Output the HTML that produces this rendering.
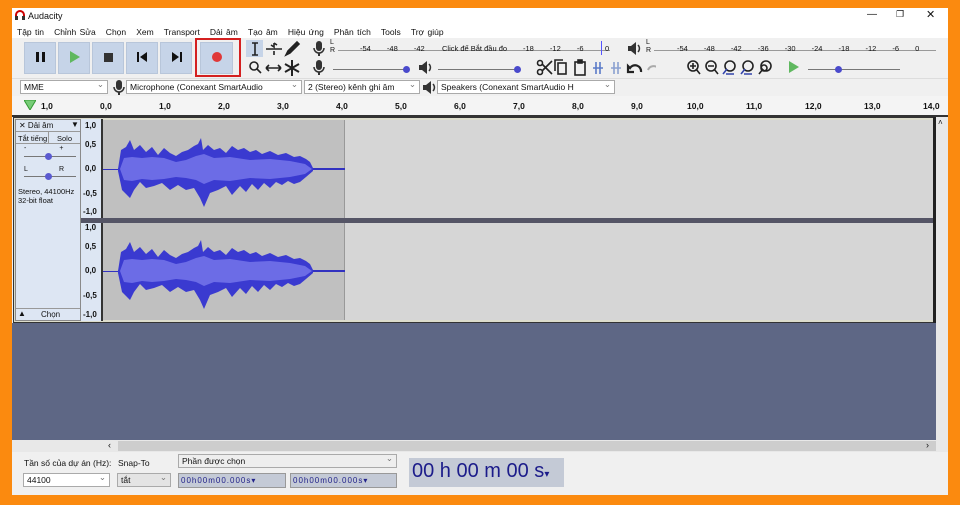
<!DOCTYPE html>
<html><head><meta charset="utf-8"><style>
*{margin:0;padding:0;box-sizing:border-box}
body{width:960px;height:505px;background:#fb8a0f;position:relative;overflow:hidden;font-family:"Liberation Sans","Noto Sans CJK SC",sans-serif;font-size:9px;color:#111}
.a{position:absolute}
.win{left:12px;top:8px;width:936px;height:487px;background:#f0f0f0}
.btn{position:absolute;top:42px;width:32px;height:32px;background:#c6d4e8;border:1px solid #b8c6da}
.t{position:absolute;white-space:nowrap}
.dd{position:absolute;height:14px;background:#fff;border:1px solid #aaa;font-size:8.5px;padding:1px 3px;white-space:nowrap;overflow:hidden}
.dd:after{content:"⌄";position:absolute;right:3px;top:-2px;color:#777}
.ic{position:absolute;font-size:14px;color:#222;line-height:16px}
.vl{position:absolute;left:85px;font-size:8px;font-weight:bold}
</style></head><body>
<svg width="0" height="0" style="position:absolute"><defs>
<g id="mic"><rect x="4" y="0" width="6" height="10" rx="3" fill="#333"/><path d="M2 7 A5 5 0 0 0 12 7" fill="none" stroke="#333" stroke-width="1.5"/><rect x="6" y="12" width="2" height="3" fill="#333"/></g>
<g id="spk"><path d="M1 5 H4 L9 1 V14 L4 10 H1Z" fill="#333"/><path d="M11 4 A5 5 0 0 1 11 11" fill="none" stroke="#333" stroke-width="1.5"/></g>
</defs></svg>
<div class="a win"></div>
<div class="a" style="left:12px;top:8px;width:936px;height:16px;background:#fff"></div>
<svg class="a" style="left:14px;top:10px" width="12" height="11"><path d="M2 8 V5 A4 4 0 0 1 10 5 V8" fill="none" stroke="#c00" stroke-width="2"/><rect x="1" y="6" width="3" height="4" fill="#333"/><rect x="8" y="6" width="3" height="4" fill="#333"/></svg>
<div class="t" style="left:28px;top:11px">Audacity</div>
<div class="t" style="left:867px;top:9px;font-size:10px">—</div>
<div class="t" style="left:896px;top:9px;font-size:9px">❐</div>
<div class="t" style="left:926px;top:8px;font-size:11px">✕</div>
<div class="a" style="left:12px;top:24px;width:936px;height:14px;background:#fff"></div>
<div class="t" style="left:17px;top:27px;font-size:8.5px;word-spacing:1px">Tập tin&nbsp;&nbsp;&nbsp;Chỉnh Sửa&nbsp;&nbsp;&nbsp;Chọn&nbsp;&nbsp;&nbsp;Xem&nbsp;&nbsp;&nbsp;Transport&nbsp;&nbsp;&nbsp;Dải âm&nbsp;&nbsp;&nbsp;Tạo âm&nbsp;&nbsp;&nbsp;Hiệu ứng&nbsp;&nbsp;&nbsp;Phân tích&nbsp;&nbsp;&nbsp;Tools&nbsp;&nbsp;&nbsp;Trợ giúp</div>
<div class="btn" style="left:24px"></div><div class="btn" style="left:58px"></div><div class="btn" style="left:92px"></div><div class="btn" style="left:126px"></div><div class="btn" style="left:160px"></div><div class="btn" style="left:200px;width:33px"></div>
<div class="a" style="left:195px;top:38px;width:46px;height:39px;border:2px solid #d42020"></div>
<div class="a" style="left:36px;top:52px;width:3px;height:10px;background:#111"></div><div class="a" style="left:42px;top:52px;width:3px;height:10px;background:#111"></div>
<svg class="a" style="left:69px;top:50px" width="12" height="14"><path d="M1 1 L11 7 L1 13Z" fill="#5fb85f"/></svg>
<div class="a" style="left:104px;top:53px;width:9px;height:9px;background:#333"></div>
<svg class="a" style="left:137px;top:52px" width="10" height="10"><rect x="0" y="0" width="2" height="10" fill="#111"/><path d="M10 0 L3 5 L10 10Z" fill="#111"/></svg>
<svg class="a" style="left:172px;top:52px" width="10" height="10"><rect x="8" y="0" width="2" height="10" fill="#111"/><path d="M0 0 L7 5 L0 10Z" fill="#111"/></svg>
<div class="a" style="left:212px;top:52px;width:10px;height:10px;border-radius:50%;background:#e03838"></div>
<div class="a" style="left:246px;top:40px;width:17px;height:17px;background:#c6d4e8"></div>
<svg class="a" style="left:246px;top:40px" width="60" height="38" stroke="#222" fill="none" stroke-width="1.6">
<path d="M9 3V15M6 3H12M6 15H12"/>
<path d="M20 9H36M28 3V7L25 5M28 3L31 5M28 15V11"/>
<path d="M40 15L42 11L51 2L53 4L44 13Z" fill="#222"/>
<circle cx="8" cy="26" r="4"/><path d="M11 29L15 33"/>
<path d="M20 28H35M20 28L23 25M20 28L23 31M35 28L32 25M35 28L32 31"/>
<path d="M46 20V36M39 24L53 32M39 32L53 24" stroke-width="2"/>
</svg>
<svg class="a" style="left:312px;top:41px" width="14" height="16"><use href="#mic"/></svg>
<svg class="a" style="left:312px;top:60px" width="14" height="16"><use href="#mic"/></svg>
<div class="t" style="left:330px;top:39px;font-size:7px;line-height:8px">L<br>R</div>
<div class="a" style="left:338px;top:50px;width:272px;height:1px;background:#999"></div>
<div class="t" style="left:360px;top:44px;font-size:7.5px;word-spacing:14px">-54 -48 -42</div>
<div class="t" style="left:442px;top:44px;font-size:7.5px">Click để Bắt đầu đo</div>
<div class="t" style="left:523px;top:44px;font-size:7.5px;word-spacing:14px">-18 -12 -6</div>
<div class="a" style="left:601px;top:41px;width:1px;height:14px;background:#55f"></div><div class="t" style="left:605px;top:44px;font-size:7.5px">0</div>
<div class="a" style="left:333px;top:69px;width:74px;height:1px;background:#777"></div>
<div class="a" style="left:403px;top:66px;width:7px;height:7px;border-radius:50%;background:#4a4acc"></div>
<svg class="a" style="left:418px;top:60px" width="16" height="16"><use href="#spk"/></svg>
<div class="a" style="left:438px;top:69px;width:80px;height:1px;background:#777"></div>
<div class="a" style="left:514px;top:66px;width:7px;height:7px;border-radius:50%;background:#4a4acc"></div>
<svg class="a" style="left:536px;top:58px" width="120" height="20" stroke="#222" fill="none" stroke-width="1.6">
<circle cx="4" cy="14" r="2.5"/><circle cx="4" cy="5" r="2.5"/><path d="M6 13L16 3M6 6L16 16"/>
<rect x="22" y="5" width="8" height="11"/><path d="M19 13V2H27"/>
<rect x="39" y="4" width="10" height="13"/><rect x="42" y="2" width="4" height="3" fill="#222"/>
<path d="M60 4V16M64 4V16M57 10H67" stroke="#5a7ac8"/><path d="M78 4V16M82 4V16M75 10H85" stroke="#8aa0d0"/>
<path d="M105 14A6 6 0 0 0 94 10L92 8V14H98" stroke-width="2.2"/>
<path d="M112 12A6 6 0 0 1 122 10" stroke="#aaa" stroke-width="2"/>
</svg>
<svg class="a" style="left:686px;top:59px" width="95" height="18" stroke="#222" fill="none" stroke-width="1.6">
<circle cx="7" cy="7" r="5"/><path d="M10 10L14 15M4 7H10M7 4V10"/>
<circle cx="25" cy="7" r="5"/><path d="M28 10L32 15M22 7H28"/>
<circle cx="44" cy="7" r="5"/><path d="M41 10L37 15M40 15H48" stroke="#3344aa"/>
<circle cx="62" cy="7" r="5"/><path d="M59 10L55 15M58 15H66" stroke="#3344aa"/>
<circle cx="80" cy="7" r="5"/><circle cx="78" cy="9" r="3"/><path d="M77 10L73 15"/>
</svg>
<svg class="a" style="left:788px;top:61px" width="12" height="12"><path d="M1 0 L11 6 L1 12Z" fill="#5fb85f"/></svg>
<div class="a" style="left:808px;top:69px;width:92px;height:1px;background:#777"></div>
<div class="a" style="left:835px;top:66px;width:7px;height:7px;border-radius:50%;background:#4a4acc"></div>
<svg class="a" style="left:627px;top:41px" width="16" height="16"><use href="#spk"/></svg>
<div class="t" style="left:646px;top:39px;font-size:7px;line-height:8px">L<br>R</div>
<div class="a" style="left:654px;top:50px;width:282px;height:1px;background:#999"></div>
<div class="t" style="left:677px;top:44px;font-size:7.5px;word-spacing:14px">-54 -48 -42 -36 -30 -24 -18 -12 -6 0</div>
<div class="a" style="left:12px;top:78px;width:936px;height:1px;background:#ddd"></div>
<div class="dd" style="left:20px;top:80px;width:88px">MME</div>
<svg class="a" style="left:112px;top:80px" width="14" height="16"><use href="#mic"/></svg>
<div class="dd" style="left:126px;top:80px;width:176px">Microphone (Conexant SmartAudio</div>
<div class="dd" style="left:304px;top:80px;width:116px">2 (Stereo) kênh ghi âm</div>
<svg class="a" style="left:422px;top:80px" width="16" height="16"><use href="#spk"/></svg>
<div class="dd" style="left:437px;top:80px;width:178px">Speakers (Conexant SmartAudio H</div>
<div class="a" style="left:12px;top:96px;width:936px;height:20px;background:#f4f4f4"></div>
<svg class="a" style="left:24px;top:100px" width="12" height="10"><path d="M0 0 L12 0 L6 10Z" fill="#7c7" stroke="#393" /></svg>
<div class="t" style="left:41px;top:101px;font-weight:bold;font-size:8.5px">1,0</div>
<div class="t" style="left:100px;top:101px;font-weight:bold;font-size:8.5px">
<span class="a" style="left:0">0,0</span><span class="a" style="left:59px">1,0</span><span class="a" style="left:118px">2,0</span><span class="a" style="left:177px">3,0</span><span class="a" style="left:236px">4,0</span><span class="a" style="left:295px">5,0</span><span class="a" style="left:354px">6,0</span><span class="a" style="left:413px">7,0</span><span class="a" style="left:472px">8,0</span><span class="a" style="left:531px">9,0</span><span class="a" style="left:587px">10,0</span><span class="a" style="left:646px">11,0</span><span class="a" style="left:705px">12,0</span><span class="a" style="left:764px">13,0</span><span class="a" style="left:823px">14,0</span></div>
<div class="a" style="left:12px;top:115px;width:936px;height:2px;background:#333"></div>
<div class="a" style="left:13px;top:117px;width:923px;height:206px;background:#dcdccc;border:1px solid #333"></div>
<div class="a" style="left:15px;top:119px;width:66px;height:202px;background:#dde6f3;border:1px solid #8a8a8a"></div>
<div class="t" style="left:19px;top:121px;font-size:8px">✕ Dải âm</div><div class="t" style="left:71px;top:120px;font-size:8px">▼</div>
<div class="a" style="left:16px;top:131px;width:64px;height:13px;border-top:1px solid #999;border-bottom:1px solid #999"></div>
<div class="a" style="left:48px;top:131px;width:1px;height:13px;background:#999"></div>
<div class="t" style="left:18px;top:134px;font-size:7.5px">Tắt tiếng</div><div class="t" style="left:57px;top:134px;font-size:7.5px">Solo</div>
<div class="t" style="left:24px;top:145px;font-size:7px">-&nbsp;&nbsp;&nbsp;&nbsp;&nbsp;&nbsp;&nbsp;&nbsp;&nbsp;&nbsp;&nbsp;&nbsp;&nbsp;&nbsp;&nbsp;&nbsp;&nbsp;+</div>
<div class="a" style="left:24px;top:156px;width:52px;height:1px;background:#777"></div><div class="a" style="left:45px;top:153px;width:7px;height:7px;border-radius:50%;background:#5a5ad0"></div>
<div class="t" style="left:24px;top:166px;font-size:7px">L&nbsp;&nbsp;&nbsp;&nbsp;&nbsp;&nbsp;&nbsp;&nbsp;&nbsp;&nbsp;&nbsp;&nbsp;&nbsp;&nbsp;&nbsp;&nbsp;R</div>
<div class="a" style="left:24px;top:176px;width:52px;height:1px;background:#777"></div><div class="a" style="left:45px;top:173px;width:7px;height:7px;border-radius:50%;background:#5a5ad0"></div>
<div class="t" style="left:18px;top:187px;font-size:7.5px;line-height:9px">Stereo, 44100Hz<br>32-bit float</div>
<div class="a" style="left:16px;top:308px;width:64px;height:12px;border-top:1px solid #999"></div>
<div class="t" style="left:18px;top:309px;font-size:8px">▲</div><div class="t" style="left:41px;top:310px;font-size:8px">Chọn</div>
<div class="a" style="left:81px;top:119px;width:22px;height:202px;background:#dde6f3;border-right:2px solid #333"></div>
<div class="vl" style="top:121px">1,0</div><div class="vl" style="top:140px">0,5</div><div class="vl" style="top:164px">0,0</div><div class="vl" style="left:83px;top:189px">-0,5</div><div class="vl" style="left:83px;top:207px">-1,0</div>
<div class="vl" style="top:223px">1,0</div><div class="vl" style="top:242px">0,5</div><div class="vl" style="top:266px">0,0</div><div class="vl" style="left:83px;top:291px">-0,5</div><div class="vl" style="left:83px;top:310px">-1,0</div>
<div class="a" style="left:81px;top:218px;width:855px;height:5px;background:#555566"></div>
<div class="a" style="left:103px;top:120px;width:831px;height:98px;background:#d6d6d6"></div>
<div class="a" style="left:103px;top:223px;width:831px;height:97px;background:#d6d6d6"></div>
<div class="a" style="left:103px;top:120px;width:242px;height:98px;background:#c0c0c0;border-right:1px solid #999"></div>
<div class="a" style="left:103px;top:223px;width:242px;height:97px;background:#c0c0c0;border-right:1px solid #999"></div>
<div class="a" style="left:933px;top:117px;width:3px;height:206px;background:#222"></div>
<svg class="a" style="left:0;top:0" width="400" height="330">
<defs><g id="w">
<path d="M103 169H118V168H345V170H103Z" fill="#3232c0"/>
<polygon fill="#3a3ad0" points="118,169 121,150 126,147 130,140 134,150 140,145 146,152 152,147 158,155 164,148 170,153 176,156 182,152 188,150 194,146 198,144 201,138 203,150 208,145 214,150 220,148 226,153 232,146 238,150 244,148 250,152 256,150 262,154 270,151 278,155 286,153 294,157 300,156 306,159 310,162 313,168 313,171 306,177 300,182 294,184 288,181 282,185 276,182 270,188 264,183 258,190 252,184 246,192 240,186 232,195 226,186 218,190 210,193 204,207 200,198 194,188 186,190 178,185 170,190 162,183 154,186 146,188 140,182 134,190 130,198 126,194 122,190 118,171"/>
<polygon fill="#6c6ce6" points="120,169 124,158 132,157 142,158 152,157 164,158 176,162 186,160 196,156 204,154 214,158 230,157 250,160 270,159 290,161 305,164 312,169 305,174 290,177 270,179 250,178 230,181 214,180 204,184 196,180 186,178 176,177 164,179 152,180 142,179 132,181 124,180"/>
</g></defs>
<use href="#w"/><use href="#w" y="102"/>
</svg>
<div class="a" style="left:12px;top:323px;width:924px;height:117px;background:#5e6785"></div>
<div class="a" style="left:936px;top:117px;width:12px;height:323px;background:#e8e8e8"></div>
<div class="t" style="left:938px;top:118px;font-size:8px">˄</div>
<div class="t" style="left:938px;top:440px;font-size:8px">˅</div>
<div class="a" style="left:12px;top:440px;width:936px;height:12px;background:#e8e8e8"></div>
<div class="a" style="left:118px;top:441px;width:818px;height:10px;background:#cdcdcd"></div>
<div class="t" style="left:108px;top:440px;font-size:9px">‹</div>
<div class="t" style="left:926px;top:440px;font-size:9px">›</div>
<div class="a" style="left:12px;top:452px;width:936px;height:41px;background:#f0f0f0"></div>
<div class="t" style="left:24px;top:458px;font-size:8.5px">Tần số của dự án (Hz):</div>
<div class="t" style="left:118px;top:458px;font-size:8.5px">Snap-To</div>
<div class="dd" style="left:23px;top:473px;width:87px">44100</div>
<div class="dd" style="left:117px;top:473px;width:54px;background:#e4e4e4">tắt</div>
<div class="dd" style="left:178px;top:454px;width:219px;background:#eee">Phần được chọn</div>
<div class="a" style="left:178px;top:473px;width:108px;height:15px;background:#c4cad6;border:1px solid #999"></div>
<div class="t" style="left:181px;top:476px;font-size:8px;color:#22228a;letter-spacing:1px">00h00m00.000s▾</div>
<div class="a" style="left:290px;top:473px;width:107px;height:15px;background:#c4cad6;border:1px solid #999"></div>
<div class="t" style="left:293px;top:476px;font-size:8px;color:#22228a;letter-spacing:1px">00h00m00.000s▾</div>
<div class="a" style="left:409px;top:458px;width:155px;height:29px;background:#c4cad6"></div>
<div class="t" style="left:412px;top:460px;font-size:20px;color:#1c1c8a">00 h 00 m 00 s<span style="font-size:10px">▾</span></div>
</body></html>
